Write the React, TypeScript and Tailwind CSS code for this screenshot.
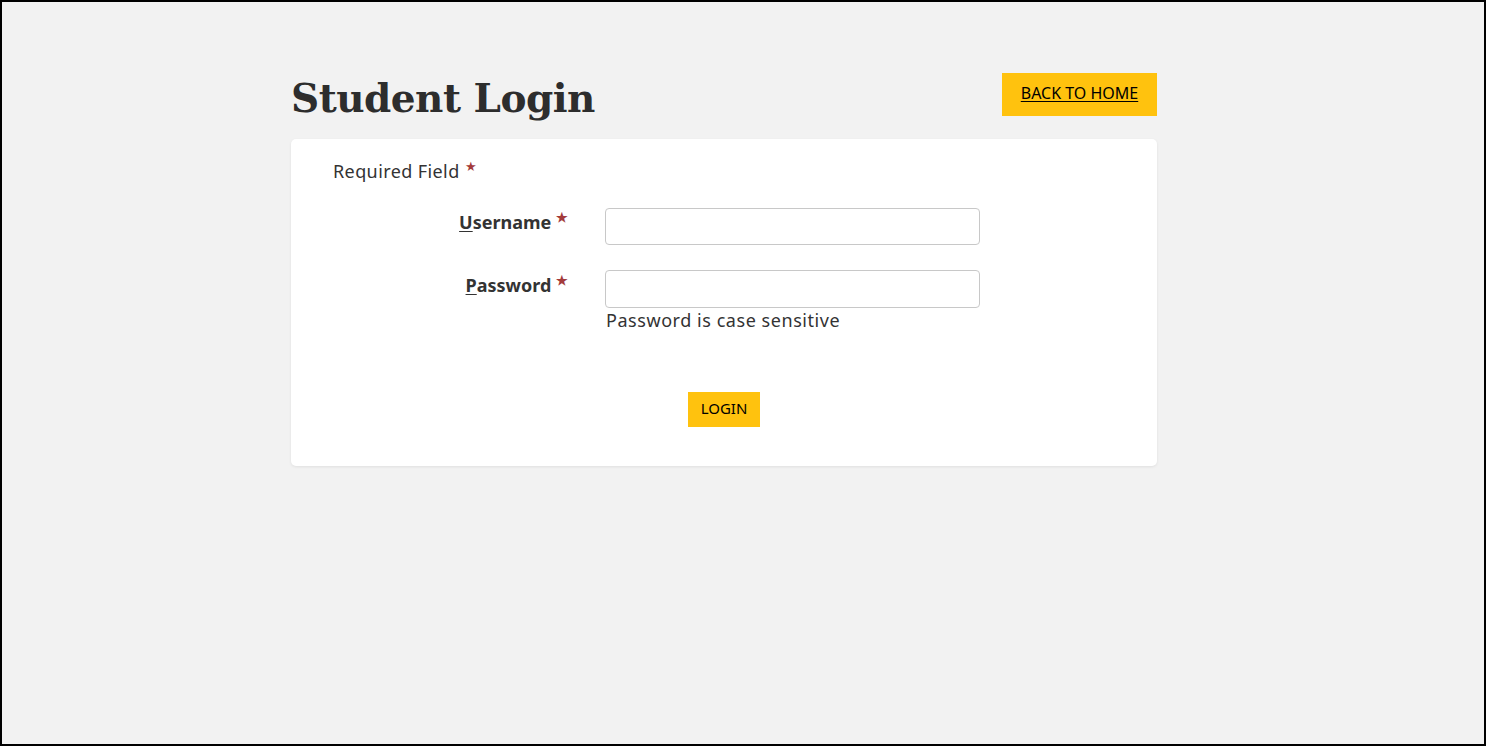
export default function App() {
  return (
    <div
      className="h-[746px] w-full border-2 border-black bg-[#f2f2f2] text-[#333]"
      style={{ fontFamily: '"Noto Sans", "Open Sans", sans-serif' }}
    >
      <div className="ml-[289px] w-[866px] pt-[71px]">
        {/* Title row */}
        <div className="flex items-start justify-between">
          <h1
            className="mt-[1px] text-[39px] font-bold leading-[48px] tracking-[-0.5px] text-[#2d2d2d]"
            style={{ fontFamily: '"DejaVu Serif", "Liberation Serif", serif' }}
          >
            Student Login
          </h1>
          <a
            href="#"
            className="flex h-[43px] w-[155px] items-center justify-center bg-[#ffc20e] pb-[3px] text-[16px] text-black underline underline-offset-2"
          >
            BACK TO HOME
          </a>
        </div>

        {/* Form card */}
        <div className="mt-[17px] h-[327px] rounded-[5px] bg-white pl-[42px] pt-[20px] shadow-[0_1px_3px_rgba(0,0,0,0.08)]">
          <p className="text-[18px] leading-6 tracking-[0.4px]">
            Required Field <span className="relative -top-[7px] text-[13px] text-[#a33b3b]">★</span>
          </p>

          <div className="mt-[23px] flex items-start">
            <label className="w-[243px] pr-[8px] pt-[2px] text-right text-[18px] font-bold leading-6">
              <span className="underline underline-offset-2">U</span>sername{' '}
              <span className="relative -top-[7px] text-[13px] text-[#a33b3b]">★</span>
            </label>
            <input
              type="text"
              className="ml-[29px] h-[37px] w-[375px] rounded-[4px] border border-[#c8c8c8] bg-white"
            />
          </div>

          <div className="mt-[25px] flex items-start">
            <label className="w-[243px] pr-[8px] pt-[3px] text-right text-[18px] font-bold leading-6">
              <span className="underline underline-offset-2">P</span>assword{' '}
              <span className="relative -top-[7px] text-[13px] text-[#a33b3b]">★</span>
            </label>
            <div className="ml-[29px]">
              <input
                type="password"
                className="h-[38px] w-[375px] rounded-[4px] border border-[#c8c8c8] bg-white"
              />
              <p className="pl-[1px] text-[18px] leading-6 tracking-[0.55px]">Password is case sensitive</p>
            </div>
          </div>

          <div className="mt-[60px] flex pl-[355px]">
            <button className="h-[35px] w-[72px] bg-[#ffc20e] pb-[2px] text-[15px] text-black">LOGIN</button>
          </div>
        </div>
      </div>
    </div>
  )
}
